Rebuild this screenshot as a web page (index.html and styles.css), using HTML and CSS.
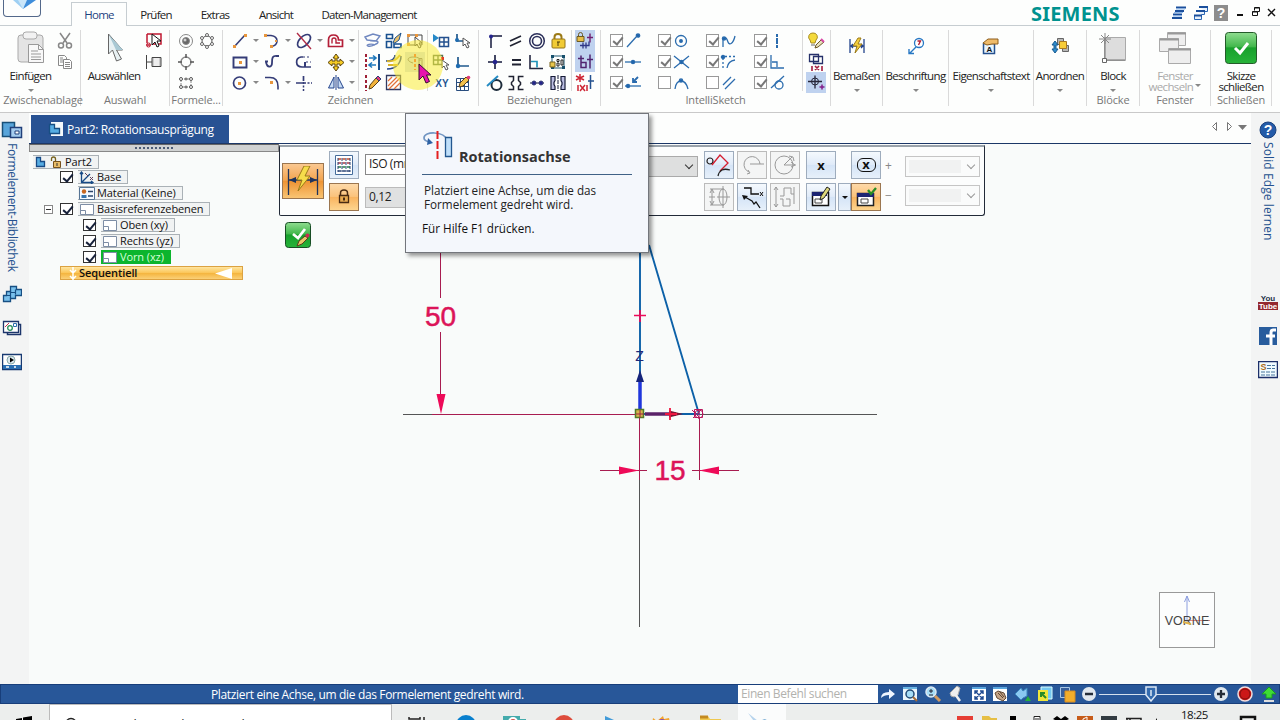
FILE: index.html
```html
<!DOCTYPE html>
<html lang="de">
<head>
    <meta charset="UTF-8">
    <meta name="viewport" content="width=device-width, initial-scale=1.0">
    <title>Solid Edge - Part2</title>
    <link rel="stylesheet" href="styles.css">
</head>
<body>
    <header class="titlebar">
        <div class="app-button">
            <svg width="34" height="14" viewBox="0 0 34 14"><path d="M7 0L17 9L19 0Z" fill="#9fd0f3"/><path d="M19 0L17 9L30 0Z" fill="#3f8edb"/><path d="M12 0L17 9L21 0Z" fill="#c9e6fa"/></svg>
        </div>
        <nav class="tabs">
            <span class="tab tab-active">Home</span>
            <span class="tab tab-pruefen">Prüfen</span>
            <span class="tab tab-extras">Extras</span>
            <span class="tab tab-ansicht">Ansicht</span>
            <span class="tab tab-daten">Daten-Management</span>
        </nav>
        <span class="brand">SIEMENS</span>
        <div class="window-tools">
            <svg width="16" height="16" viewBox="0 0 16 16"><path d="M5 2.500h10M4 6h9M2 9.500h9M1 13h10" stroke="#1b4f9c" stroke-width="2"/><path d="M5 4h9M3 7.500h9M2 11h9" stroke="#8cb6ea"/></svg>
            <svg width="16" height="16" viewBox="0 0 16 16"><path d="M6.500 1.500h8v5h-3M3.500 5.500h8v4h-3M1.500 10.500h7v4h-7z" fill="#e8f1fb" stroke="#2a66b4"/><path d="M6 2h9M3 6h9M1 10.500h8" stroke="#1b4f9c" stroke-width="2"/></svg>
            <svg width="14" height="16" viewBox="0 0 14 16"><rect width="14" height="16" fill="#8d8d8d"/><text x="7" y="13" class="help-mark">?</text></svg>
            <svg width="12" height="14" viewBox="0 0 12 14"><path d="M3 10h6" stroke="#111" stroke-width="2"/></svg>
            <svg width="10" height="14" viewBox="0 0 10 14"><path d="M3.500 5.500v-3h5v4h-2M1.500 6.500h5v4h-5zM1.500 7h5M3.500 3h5" fill="none" stroke="#111"/></svg>
            <svg width="10" height="14" viewBox="0 0 10 14"><path d="M1 4l7 7M8 4l-7 7" stroke="#111" stroke-width="1.400"/></svg>
        </div>
    </header>

    <section class="ribbon">
        <div class="group g-clipboard">
            <div class="group-body">
                <div class="big-button">
                    <svg width="34" height="34" viewBox="0 0 34 34"><rect x="4" y="4" width="25" height="27" rx="3" fill="#e4e4e4" stroke="#aaa"/><rect x="9" y="1" width="14" height="7" rx="3" fill="#f2f2f2" stroke="#aaa"/><path d="M14.500 13.500h10l5 5v13h-15z" fill="#f8f8f8" stroke="#999"/><path d="M24.500 13.500v5h5M17 20h7M17 23h10M17 26h10M17 28.500h10" fill="none" stroke="#999"/></svg>
                    <span>Einfügen</span><i class="caret"></i>
                </div>
                <div class="icon-grid">
                    <svg class="ico gray" viewBox="0 0 20 20"><path d="M5 2l7 10M15 2L8 12" stroke-width="1.500"/><circle cx="6" cy="14.500" r="2.500" stroke-width="1.500"/><circle cx="14" cy="14.500" r="2.500" stroke-width="1.500"/></svg>
                    <svg class="ico gray" viewBox="0 0 20 20"><path d="M3.500 3.500h6l2 2v8h-8z"/><path d="M8.500 7.500h6l2 2v7h-8z" fill="#fff"/><path d="M10 10.500h5M10 12.500h5M10 14.500h5M5 6h3M5 8h3M5 10h3"/></svg>
                </div>
            </div>
            <div class="group-label">Zwischenablage</div>
        </div>

        <div class="group g-select">
            <div class="group-body">
                <div class="big-button">
                    <svg width="34" height="34" viewBox="0 0 34 34"><path d="M11.500 3v20l4-4 4 11 5-2-5-9h6z" fill="#e8f1f3" stroke="#666"/><path d="M12 4l14 15h-7z" fill="#a9c9d4"/></svg>
                    <span>Auswählen</span>
                </div>
                <div class="icon-grid">
                    <svg class="ico" viewBox="0 0 20 20"><path d="M3 3h14v10h-3M3 3v9M6 14H3M8 13h4" stroke="#c01830" stroke-width="1.500"/><circle cx="4.500" cy="14" r="2" stroke="#c01830"/><path d="M8 3v11l3-3 2 5 2-1-2-5h4z" fill="#fff" stroke="#111"/></svg>
                    <svg class="ico gray" viewBox="0 0 20 20"><path d="M2.500 3v14M3 10h5M8 5.500h9v9H8z" fill="#ccc" stroke="#444"/><path d="M10 6h5v8h-5z" fill="#eee" stroke="none"/></svg>
                </div>
            </div>
            <div class="group-label">Auswahl</div>
        </div>

        <div class="group g-form">
            <div class="group-body">
                <div class="icon-grid cols-2">
                    <svg class="ico gray" viewBox="0 0 20 20"><circle cx="10" cy="10" r="6.500"/><circle cx="10" cy="10" r="3.500" fill="#666"/><circle cx="9" cy="9" r="1.500" fill="#eee"/></svg>
                    <svg class="ico gray" viewBox="0 0 20 20"><circle cx="10" cy="10" r="5" stroke="#555"/><g fill="#fff" stroke="#666"><circle cx="10" cy="4" r="1.500"/><circle cx="15" cy="7" r="1.500"/><circle cx="15" cy="13" r="1.500"/><circle cx="10" cy="16" r="1.500"/><circle cx="5" cy="13" r="1.500"/><circle cx="5" cy="7" r="1.500"/></g></svg>
                    <svg class="ico gray" viewBox="0 0 20 20"><circle cx="10" cy="10" r="5" stroke-width="1.400"/><path d="M10 2v4M10 14v4M2 10h4M14 10h4" stroke="#555" stroke-width="1.500"/></svg>
                    <i></i>
                    <svg class="ico gray" viewBox="0 0 20 20"><path d="M5 6h10v8H5z" stroke-dasharray="2 1"/><g fill="#fff" stroke="#555"><circle cx="5" cy="6" r="1.500"/><circle cx="10" cy="6" r="1"/><circle cx="15" cy="6" r="1.500"/><circle cx="5" cy="14" r="1.500"/><circle cx="10" cy="14" r="1"/><circle cx="15" cy="14" r="1.500"/></g></svg>
                </div>
            </div>
            <div class="group-label">Formele...</div>
        </div>

        <div class="group g-draw">
            <div class="group-body">
                <div class="icon-grid cols-draw">
                    <svg class="ico" viewBox="0 0 20 20"><path d="M4 16L15 4" stroke-width="1.600"/><path class="dot" d="M3 14h3v3H3zM14 3h3v3h-3z"/></svg><i class="caret"></i>
                    <svg class="ico" viewBox="0 0 20 20"><path d="M4 4.500h5c8 1 8 10 0 11" stroke-width="1.600"/><path class="dot" d="M2 3h3v3H2zM8 14h3v3H8zM13 9h2v2h-2z"/></svg><i class="caret"></i>
                    <svg class="ico" viewBox="0 0 20 20"><ellipse cx="10" cy="10" rx="8" ry="4.500" transform="rotate(-45 10 10)" stroke-width="1.700"/><path d="M3 2l14 16" stroke="#b02a45" stroke-width="1.300"/></svg><i class="caret"></i>
                    <svg class="ico" viewBox="0 0 20 20"><path d="M2.500 15.500V9q0-5 5-5t5 5h4v6.500z" stroke="#b41f38" stroke-width="1.700"/><path d="M6 12.500V9q0-2 2-2t2 2v3h4" stroke="#b41f38" stroke-width="1.400"/></svg><i class="caret"></i>

                    <svg class="ico" viewBox="0 0 20 20"><path d="M3.500 5.500h13v10h-13z" stroke-width="1.900"/><path class="dot" d="M9 9h3v3H9z"/></svg><i class="caret"></i>
                    <svg class="ico" viewBox="0 0 20 20"><path d="M4 10c1 6 6 6 6 1s0-8 6-7" stroke-width="1.800"/><path d="M3 9.500h3M14 4h3" stroke-width="2"/></svg><i></i>
                    <svg class="ico" viewBox="0 0 20 20"><path d="M9 5H7c-6 1-6 10 1 10h9" stroke-width="1.700"/><path d="M9 5h8M12 10h5" stroke-dasharray="2 2"/><path d="M11 10v5" stroke-width="2"/></svg><i></i>
                    <svg class="ico" viewBox="0 0 20 20"><path d="M10 2l3 4h-2v3h3V7l4 3.500-4 3.500v-2h-3v3h2l-3 4-3-4h2v-3H6v2l-4-3.500L6 7v2h3V6H7z" fill="#f5cb25" stroke="#5c4510"/></svg><i class="caret"></i>

                    <svg class="ico" viewBox="0 0 20 20"><circle cx="9.500" cy="10" r="6" stroke-width="1.700"/><path class="dot" d="M8 9h3v3H8z"/></svg><i class="caret"></i>
                    <svg class="ico" viewBox="0 0 20 20"><path d="M3 4.500h5q8 0 8 9v3" stroke-width="1.600"/><path class="dot" d="M8 8h3v3H8z"/></svg><i class="caret"></i>
                    <svg class="ico" viewBox="0 0 20 20"><path d="M2 10h7M9.500 3v5" stroke-width="1.700"/><path d="M9.500 9v9M10 10h8" stroke-dasharray="2 1.500" stroke-width="1.500"/></svg><i></i>
                    <svg class="ico" viewBox="0 0 20 20"><path d="M8 4v11H2.500zM12 4v11h5.500z" fill="#c8dcf3" stroke="#24448d"/><path d="M10 2v15" stroke="#24448d"/></svg><i class="caret"></i>
                </div>
                <i class="rule"></i>
                <div class="icon-grid cols-3">
                    <svg class="ico" viewBox="0 0 20 20"><path d="M2 6l8-3 7 2-4 5-9-1zM7 10c8-1 10 1 6 3s-5 3-8 2 3-3 7-1" stroke="#7088c0" stroke-width="1.400"/></svg>
                    <svg class="ico" viewBox="0 0 20 20"><path d="M2.500 3.500h6v4h-6zM2.500 10.500h5v6h-5zM10 13h7v3.500h-7z" stroke="#18508f" stroke-width="1.600"/><path d="M9 12l2-5 6-5-2 7-4 3z" fill="#e9c16c" stroke="#18508f"/></svg>
                    <svg class="ico" viewBox="0 0 20 20"><path d="M3 4h14v10H3z" stroke="#444"/><path class="dot" d="M2 3h3v3H2zM10 3h3v3h-3zM2 12h3v3H2z"/><path d="M10 6v9l2-2 2 4 2-1-2-4h3z" fill="#fff" stroke="#444"/></svg>
                    <svg class="ico" viewBox="0 0 20 20"><path d="M3 2v16" stroke="#9e2036" stroke-width="2" stroke-dasharray="3 2"/><path d="M16 2v16" stroke="#18508f" stroke-width="2"/><path d="M6 6h7M10 3.500L13 6l-3 2.500M13 13H6M9 10.500L6 13l3 2.500" stroke="#1c78bd" stroke-width="1.600"/></svg>
                    <svg class="ico" viewBox="0 0 20 20"><path d="M2 9c7 0 9-3 9-6M3 17c10 0 14-7 14-13" stroke="#24448d" stroke-width="1.500"/><path d="M3 9c7 1 10-2 13-6M4 13h10" stroke="#d8b52c" stroke-width="2"/></svg>
                    <svg class="ico pressed" viewBox="0 0 20 20"><path d="M8 11c-7-2-6-6 0-6q8 0 7 4M14 6.500h3v9h-3z" stroke="#777"/><path d="M10 2v16" stroke="#f1592a" stroke-width="2" stroke-dasharray="3 2"/></svg>
                    <svg class="ico" viewBox="0 0 20 20"><path d="M3 2v16" stroke="#9e2036" stroke-width="2" stroke-dasharray="3 2"/><path d="M6 16l1-4 6-7 3 3-7 7z" fill="#f2b33b" stroke="#594018"/><path d="M13 5l2-2 3 3-2 2z" fill="#e13a79"/></svg>
                    <svg class="ico" viewBox="0 0 20 20"><path d="M2.500 2.500h14v14h-14z" stroke="#303a63" stroke-width="1.300"/><path d="M4 8l4-4M4 13l9-9M5 16L16 5M10 16l6-6" stroke="#e2713a" stroke-width="1.200"/></svg>
                </div>
                <i class="rule"></i>
                <div class="icon-grid cols-xy">
                    <svg class="ico" viewBox="0 0 20 20"><path d="M1 3l6 4-6 4z" fill="#2689c8" stroke="none"/><path d="M7.500 6.500h9v9h-9zM12 7v8M8 11h8" stroke="#24518f" stroke-width="1.500"/></svg>
                    <svg class="ico" viewBox="0 0 20 20"><path d="M4 3v7h8" stroke="#20598d" stroke-width="1.700"/><circle cx="4" cy="9" r="2" fill="#1f6cb0" stroke="none"/><path d="M10 7v8l2-2 2 4 2-1-2-4h3z" fill="#fff" stroke="#555"/></svg>
                    <svg class="ico" viewBox="0 0 20 20"><path d="M1.500 3.500h9v9h-9zM6 4v8M2 8h8" stroke="#5b7552" stroke-width="1.400"/><path d="M9 5h3v3H9z" fill="#e43c28" stroke="none"/><path d="M10 8v8l2-2 2 4 2-1-2-4h3z" fill="#fff" stroke="#555"/></svg>
                    <svg class="ico" viewBox="0 0 20 20"><path d="M5 5v9h11" stroke="#20598d" stroke-width="1.700"/><circle cx="5" cy="14" r="2.200" fill="#1f6cb0" stroke="none"/></svg>
                    <svg class="ico" viewBox="0 0 20 20"><text x="10" y="14" class="xy">XY</text></svg>
                    <svg class="ico" viewBox="0 0 20 20"><path d="M3.500 5.500h12v12h-12zM7.500 6v11M11.500 6v11M4 9.500h11M4 13.500h11" stroke="#294d7e"/><path d="M6 14l1-4 6-6 3 3-6 6z" fill="#f2c04b" stroke="#594018"/><circle cx="15.500" cy="4.500" r="1.800" fill="#e13a79" stroke="none"/></svg>
                </div>
            </div>
            <div class="group-label">Zeichnen</div>
        </div>

        <div class="group g-rel">
            <div class="group-body">
                <div class="icon-grid cols-4">
                    <svg class="ico" viewBox="0 0 20 20"><path d="M6 17V5h11" stroke="#151a3c" stroke-width="1.500"/><circle cx="6" cy="5.500" r="2" fill="#24248c" stroke="none"/></svg>
                    <svg class="ico dark" viewBox="0 0 20 20"><path d="M4 10l11-5M4 15l11-5" stroke-width="1.600"/></svg>
                    <svg class="ico" viewBox="0 0 20 20"><circle cx="10" cy="10" r="7.300" stroke="#2d315b" stroke-width="1.500"/><circle cx="10" cy="10" r="4.500" stroke="#2d315b" stroke-width="1.600"/></svg>
                    <svg class="ico" viewBox="0 0 20 20"><path d="M6.500 9V6q0-3 3.500-3t3.500 3v3" stroke="#9b7a16" stroke-width="2"/><rect x="4" y="8" width="13" height="9" rx="1" fill="#f1cb35" stroke="#94751b"/><path d="M10 11v4M9 11h3" stroke="#493908"/></svg>
                    <svg class="ico" viewBox="0 0 20 20"><path d="M10 3v14M3 10h14" stroke="#151a3c" stroke-width="1.600"/><circle cx="10" cy="10" r="2.300" fill="#24248c" stroke="none"/></svg>
                    <svg class="ico dark" viewBox="0 0 20 20"><path d="M6 8h9M6 12.500h9" stroke-width="2.200"/></svg>
                    <svg class="ico" viewBox="0 0 20 20"><path d="M3 3v13.500h13" stroke="#242741" stroke-width="1.600"/><path d="M4 9.500h6v6" stroke="#2394bb" stroke-width="1.700"/></svg>
                    <svg class="ico" viewBox="0 0 20 20"><path d="M4 4h12v12H4z" stroke="#1d5670"/><path d="M3 3h3v3H3zM14 3h3v3h-3zM3 14h3v3H3zM14 14h3v3h-3z" fill="#164f6b" stroke="none"/><path d="M2 10h5v5H2z" fill="#e9c64c" stroke="#76621d"/><path d="M9 7.500h2v2H9zM9 11h2v3H9zM13 8h2v5h-2z" fill="#fff" stroke="#222"/></svg>
                    <svg class="ico" viewBox="0 0 20 20"><circle cx="11.500" cy="12" r="5" stroke="#1d2c3b" stroke-width="2"/><path d="M2 13L13 3" stroke="#248ac2" stroke-width="1.900"/></svg>
                    <svg class="ico dark" viewBox="0 0 20 20"><path d="M2.500 3.500h5v4l-2 2v2l2 2v3h-5M17.500 3.500h-5v4l2 2v2l-2 2v3h5" stroke-width="1.500"/></svg>
                    <svg class="ico" viewBox="0 0 20 20"><path d="M3 10h14" stroke="#151a3c"/><circle cx="7" cy="10" r="2" fill="#24248c"/><circle cx="14" cy="10" r="2" fill="#24248c"/></svg>
                    <svg class="ico" viewBox="0 0 20 20"><path d="M3 3.500h4v4l-1 2v2l1 2v3H3zM17 3.500h-4v4l1 2v2l-1 2v3h4z" fill="#babde0" stroke="#171b38" stroke-width="1.200"/><path d="M10 2v16" stroke="#171b38" stroke-dasharray="4 1"/></svg>
                </div>
                <i class="rule"></i>
                <div class="icon-grid toggles">
                    <svg class="ico on" viewBox="0 0 20 20"><path d="M3.500 6.500V4q0-2 2-2t2 2v2.500" stroke="#6b5b26"/><path d="M2 6h7v5H2z" fill="#e6bc47" stroke="#6b5b26"/><path d="M15 3v9M12 7h6" stroke="#702070" stroke-width="1.400"/><path d="M5 15h9v-4M8 12v6M11 12v6" stroke="#303888" stroke-width="1.300"/></svg>
                    <svg class="ico on" viewBox="0 0 20 20"><path d="M6 4v12h5v-5H6M3 7h6M15 3v14M12 8h6" stroke="#512470" stroke-width="1.500"/></svg>
                    <svg class="ico" viewBox="0 0 20 20"><path d="M5 1v8M1 3l8 4M9 3L1 7M3 12v6M12 12v6M5 12l5 6M10 12l-5 6" stroke="#ce2534" stroke-width="1.500"/><path d="M15.500 2v14M13 8h6" stroke="#24518f" stroke-width="1.500"/></svg>
                </div>
            </div>
            <div class="group-label">Beziehungen</div>
        </div>

        <div class="group g-intelli">
            <div class="group-body">
                <div class="icon-grid cols-check">
                    <i class="check checked"></i><svg class="ico blue" viewBox="0 0 20 20"><path d="M4 16L14 5"/><circle cx="15" cy="4.500" r="1.700"/></svg>
                    <i class="check checked"></i><svg class="ico blue" viewBox="0 0 20 20"><circle cx="10" cy="10" r="5.500" class="open"/><circle cx="10" cy="10" r="1.300"/></svg>
                    <i class="check checked"></i><svg class="ico blue" viewBox="0 0 20 20"><path d="M4 16V8c3-3 4 0 5 3s5 3 7-6" class="open"/><circle cx="5" cy="7.500" r="1.600"/></svg>
                    <i class="check checked"></i><svg class="ico blue" viewBox="0 0 20 20"><path d="M10 3v14" stroke-width="2" stroke-dasharray="3 1 6 1"/></svg>

                    <i class="check checked"></i><svg class="ico blue" viewBox="0 0 20 20"><path d="M2 10h16"/><circle cx="10" cy="10" r="1.600"/></svg>
                    <i class="check checked"></i><svg class="ico blue" viewBox="0 0 20 20"><path d="M3 4l15 12M18 4L3 16"/><circle cx="10.500" cy="10" r="1.600"/></svg>
                    <i class="check checked"></i><svg class="ico blue" viewBox="0 0 20 20"><path d="M4 6v12M6 4.500h11" stroke-dasharray="2 2"/><path d="M8 16q1-7 8-8" class="open"/><circle cx="4" cy="5" r="1.600"/></svg>
                    <i class="check checked"></i><svg class="ico blue" viewBox="0 0 20 20"><path d="M4 3v13h13M5 10h5v5" class="open"/></svg>

                    <i class="check checked"></i><svg class="ico blue" viewBox="0 0 20 20"><path d="M2 13h16"/><circle cx="5" cy="13" r="1.600"/><path d="M15 4l-5 5M10 5v4h4" stroke-width="1.800" class="open"/></svg>
                    <i class="check"></i><svg class="ico blue" viewBox="0 0 20 20"><path d="M4 16q1-8 6-8t7 8" class="open"/><circle cx="10" cy="7.500" r="1.600"/></svg>
                    <i class="check"></i><svg class="ico blue" viewBox="0 0 20 20"><path d="M4 12l8-8M6 16L16 6"/></svg>
                    <i class="check checked"></i><svg class="ico blue" viewBox="0 0 20 20"><path d="M4 15L17 3"/><circle cx="12" cy="12" r="4" class="open"/></svg>
                </div>
                <i class="rule"></i>
                <div class="icon-grid toggles">
                    <svg class="ico" viewBox="0 0 20 20"><path d="M7 2a4 4 0 0 1 3 7l-1 3H5L4 9a4 4 0 0 1 3-7z" fill="#f4da3b" stroke="#a98d23"/><path d="M5 14h4" stroke="#666"/><path d="M9 17l1-3 5-5 3 2-6 5z" fill="#e6dfbb" stroke="#6b5727"/><path d="M15 8l3 3" stroke="#d948a7" stroke-width="2"/></svg>
                    <svg class="ico" viewBox="0 0 20 20"><path d="M3.500 2.500h9v7h-9zM7.500 4.500h9v7h-9z" stroke="#26316a" stroke-width="1.300"/><path d="M6 14v5M16 14v5M9 14l4 4M13 14l-4 4" stroke="#a51c3e" stroke-width="1.600"/></svg>
                    <svg class="ico on" viewBox="0 0 20 20"><circle cx="9" cy="9" r="3.500" stroke="#252538"/><path d="M9 3v13M2 9h14" stroke="#252538" stroke-width="1.300"/><path d="M16 12v5M13.500 14.500h5" stroke="#821e8a" stroke-width="1.500"/></svg>
                </div>
            </div>
            <div class="group-label">IntelliSketch</div>
        </div>

        <div class="group g-dim">
            <div class="big-button small-art">
                <svg width="20" height="20" viewBox="0 0 20 20"><path d="M3 3v14M17 3v14M4 10h12M6 8l-2 2 2 2M14 8l2 2-2 2" stroke="#24448d" fill="none" stroke-width="1.300"/><path d="M11 2L6 10h4l-2 7 7-9h-4l3-6z" fill="#f5ce3c" stroke="#9a7a18"/></svg>
                <span>Bemaßen</span><i class="caret"></i>
            </div>
        </div>
        <div class="group g-note">
            <div class="big-button small-art">
                <svg width="20" height="20" viewBox="0 0 20 20"><circle cx="13" cy="7" r="4.500" fill="#fff" stroke="#2778c4" stroke-width="1.300"/><path d="M10 11l-6 6M3 13v4.500h5" stroke="#2778c4" fill="none" stroke-width="1.400"/><path d="M11.500 5h3l-2 4" fill="none" stroke="#b41f38" stroke-width="1.400"/></svg>
                <span>Beschriftung</span><i class="caret"></i>
            </div>
        </div>
        <div class="group g-prop">
            <div class="big-button small-art">
                <svg width="20" height="20" viewBox="0 0 20 20"><path d="M2.500 7.500h11v10h-11z" fill="#e9f5fd" stroke="#24518f" stroke-width="1.500"/><path d="M2 7l5-4h10v5h-6L6 9z" fill="#efbb69" stroke="#8e5f1e"/><text x="8" y="16" class="letter-a">A</text></svg>
                <span>Eigenschaftstext</span><i class="caret"></i>
            </div>
        </div>
        <div class="group g-arr">
            <div class="big-button small-art">
                <svg width="20" height="20" viewBox="0 0 20 20"><path d="M7.500 2.500h6v6h-6zM12.500 9.500h6v6h-6z" fill="#b6b6b6" stroke="#666"/><path d="M9.500 5.500h7v7h-7z" fill="#f8cc38" stroke="#aa7820"/><path d="M5 5l3 4H6v4h2l-3 4-3-4h2V9H2z" fill="#2e8ccc" stroke="#175b91"/></svg>
                <span>Anordnen</span><i class="caret"></i>
            </div>
        </div>
        <div class="group g-block">
            <div class="big-button">
                <svg width="34" height="34" viewBox="0 0 34 34"><path d="M8.500 6.500h21v23h-21z" fill="#ddd" stroke="#aaa"/><path d="M9 7v22h20" stroke="#777" fill="none"/><path d="M9 2v11M3 8h12M5 4l8 8M13 4l-8 8" stroke="#888"/><path d="M6.500 27.500h4v4h-4z" fill="#fff" stroke="#666"/></svg>
                <span>Block</span><i class="caret"></i>
            </div>
            <div class="group-label">Blöcke</div>
        </div>
        <div class="group g-window">
            <div class="big-button disabled">
                <svg width="34" height="34" viewBox="0 0 34 34"><g fill="#eee" stroke="#aaa"><path d="M9.500 1.500h18v13h-18z"/><path d="M1.500 7.500h19v13h-19z"/><path d="M10.500 17.500h22v15h-22z"/></g><path d="M10 2.500h18M2 8.500h19M11 18.500h22" stroke="#999" stroke-width="2"/></svg>
                <span>Fenster<br>wechseln <i class="caret"></i></span>
            </div>
            <div class="group-label">Fenster</div>
        </div>
        <div class="group g-close">
            <div class="big-button">
                <svg width="34" height="34" viewBox="0 0 34 34"><defs><linearGradient id="green" x2="0" y2="1"><stop stop-color="#8fdd90"/><stop offset=".45" stop-color="#44b84d"/><stop offset=".5" stop-color="#18a02c"/><stop offset="1" stop-color="#27b339"/></linearGradient></defs><rect x="1.500" y="1.500" width="31" height="31" rx="3" fill="url(#green)" stroke="#245b2a"/><path d="M11 17l5 5 8-10" fill="none" stroke="#fff" stroke-width="3"/></svg>
                <span>Skizze<br>schließen</span>
            </div>
            <div class="group-label">Schließen</div>
        </div>
    </section>

    <main class="workspace">
        <aside class="rail rail-left">
            <svg width="22" height="20" viewBox="0 0 22 20"><path d="M1.500 2.500h12v14h-12z" fill="#58a5da" stroke="#185078" stroke-width="1.500"/><path d="M9.500 7.500h11v10h-11z" fill="#a5ccef" stroke="#203f7a" stroke-width="1.500"/><path d="M14 11h4v3h-4z" fill="#fff" stroke="#203f7a"/></svg>
            <span class="rail-text">Formelement-Bibliothek</span>
            <svg width="20" height="18" viewBox="0 0 20 18"><path d="M8.500 1.500h6v3h5v6h-6v3h-5v3h-7v-6h3v-4h4z" fill="#79c0ec" stroke="#174f83" stroke-width="1.300"/><path d="M4.500 10.500h4v3M8.500 5.500v5M13.500 4.500v5M9 7.500h4.500" fill="none" stroke="#174f83" stroke-width="1.200"/></svg>
            <svg width="20" height="18" viewBox="0 0 20 18"><path d="M5.500 5.500h13v10h-13z" fill="#fff" stroke="#1c356b" stroke-width="1.500"/><path d="M1.500 2.500h15v11h-15z" fill="#fff" stroke="#1c356b" stroke-width="1.300"/><circle cx="8" cy="9" r="2.300" fill="none" stroke="#248c55" stroke-width="1.300"/><path d="M3 8l4-4" stroke="#c83350"/><path d="M11.500 4.500h3v3h-3z" fill="none" stroke="#2e70ae"/></svg>
            <svg width="20" height="18" viewBox="0 0 20 18"><path d="M.5 1.500h19v15H.5z" fill="#fff" stroke="#183a72" stroke-width="1.500"/><path d="M1 14h18" stroke="#2a6fb3" stroke-width="4"/><circle cx="9" cy="7" r="4" fill="#dbe7ef" stroke="#8aa"/><path d="M8 4.500l4 2.500-4 2.500z"/><path d="M4 14h3M12 14h2" stroke="#fff" stroke-width="1.500"/></svg>
        </aside>

        <section class="document">
            <div class="doc-tabs">
                <div class="doc-tab">
                    <svg width="16" height="16" viewBox="0 0 16 16"><path d="M3 1h12v14H3z" fill="#f5f9fc"/><path d="M1.500 3.500h5v4h5v5h-10z" fill="#57ade3" stroke="#174f83" stroke-width="1.300"/></svg>
                    Part2: Rotationsausprägung
                </div>
                <svg class="doc-nav" width="36" height="12" viewBox="0 0 36 12"><path d="M5.500 1.500v8L1.500 5.500zM16.500 1.500v8l4-4z" fill="#fff" stroke="#777"/><path d="M27 4h9l-4.500 5z" fill="#777"/></svg>
            </div>
            <div class="doc-body">
                <div class="pathfinder">
                    <div class="grip"></div>
                    <div class="tree">
                        <div class="row lvl-0"><span class="node"><svg width="28" height="12" viewBox="0 0 28 12"><path d="M1.500 1.500h4v4h4v5h-8z" fill="#57ade3" stroke="#174a86" stroke-width="1.300"/><path d="M16.500 5V3q0-2 2-2t2 2v3" fill="none" stroke="#76621d" stroke-width="1.300"/><path d="M18.500 5.500h7v6h-7z" fill="#e9bd68" stroke="#76511d"/><path d="M22 7v3" stroke="#333"/></svg>Part2</span></div>
                        <div class="row lvl-1"><i class="box"></i><span class="node"><svg width="16" height="13" viewBox="0 0 16 13"><path d="M2.500 1v10.500H14M3 11L11 3M1 3l1.500-2L4 3M12 10l2 1.500-2 1.500" fill="none" stroke="#174a86" stroke-width="1.300"/><path d="M6 2l3 3M11 6l3 3M14 6l-3 3" stroke="#604058"/></svg>Base</span></div>
                        <div class="row lvl-mat"><span class="node"><svg width="16" height="13" viewBox="0 0 16 13"><path d="M.5.500h15v12H.5z" fill="#f5f9ff" stroke="#567494"/><circle cx="5" cy="4.500" r="2.200" fill="#c86720"/><path d="M2.500 8h5v3h-5z" fill="#3674ae"/><path d="M9 4.500h5M9 9h5" stroke="#2a456a" stroke-width="1.400"/></svg>Material (Keine)</span></div>
                        <div class="row lvl-ref"><i class="minus"></i><i class="box"></i><span class="node"><svg class="plane" width="16" height="13" viewBox="0 0 16 13"><path d="M1.500 1.500h13v10h-13zM1.500 7.500h5v4"/></svg>Basisreferenzebenen</span></div>
                        <div class="row lvl-2"><i class="box"></i><span class="node"><svg class="plane" width="16" height="13" viewBox="0 0 16 13"><path d="M1.500 1.500h13v10h-13zM1.500 7.500h5v4"/></svg>Oben (xy)</span></div>
                        <div class="row lvl-2"><i class="box"></i><span class="node"><svg class="plane" width="16" height="13" viewBox="0 0 16 13"><path d="M1.500 1.500h13v10h-13zM1.500 7.500h5v4"/></svg>Rechts (yz)</span></div>
                        <div class="row lvl-2"><i class="box"></i><span class="node node-active"><svg class="plane" width="16" height="13" viewBox="0 0 16 13"><path d="M1.500 1.500h13v10h-13zM1.500 7.500h5v4"/></svg>Vorn (xz)</span></div>
                        <div class="sequence">
                            <svg width="10" height="13" viewBox="0 0 10 13"><path d="M5 0v13M2 3l3 3 3-3M2 9l3 3 3-3" fill="none" stroke="#fff" stroke-width="1.500"/></svg>
                            <span>Sequentiell</span>
                            <svg width="17" height="11" viewBox="0 0 17 11"><path d="M0 5.500L17 0v11z" fill="#fff"/></svg>
                        </div>
                    </div>
                </div>

                <div class="canvas">
                    <svg class="drawing" width="972" height="540" viewBox="279 144 972 540">
                        <path d="M403 414.500H877M639.500 414V627" stroke="#555"/>
                        <path d="M640 250V414H699L649 245" fill="none" stroke="#0d61a8" stroke-width="1.900"/>
                        <g stroke="#a81c50" fill="none"><path d="M432 414.500H636M440.500 250V298M440.500 332V400M600 470.500H647M692 470.500H739M639.500 418V480M699.500 418V480"/></g>
                        <g fill="#ee0a58"><path d="M436.500 394h9l-4.500 20zM619 466.500l20 4-20 4zM719 466.500l-20 4 20 4z"/></g>
                        <path d="M634 315.500h12M640 310v12" stroke="#ee0a58" stroke-width="1.700"/>
                        <path d="M640 410V378" stroke="#2037dc" stroke-width="3.500"/><path d="M636 382l4-12 4 12z" fill="#17247b"/>
                        <text x="639.500" y="361" class="axis">Z</text>
                        <path d="M645 414H676" stroke="#5b2368" stroke-width="3.500"/><path d="M669 410.500l14 3.500-14 3.500z" fill="#7d1532"/><path d="M665 414h12M670 408v12" stroke="#ee1740" stroke-width="1.800"/>
                        <rect x="635.500" y="409.500" width="8" height="8" fill="#d6b34c" stroke="#527b27" stroke-width="1.500"/><path d="M636 414h8M640 410v8" stroke="#9c2441"/>
                        <g fill="none" stroke="#b9185e"><circle cx="699" cy="414" r="4"/><path d="M694.500 409.500h8v8h-8zM692 410l8 8M693 418l9-9M699 409v10"/></g>
                        <text x="440.500" y="325.500" class="dimension">50</text>
                        <text x="670" y="480" class="dimension">15</text>
                        <g class="cube"><rect x="1159.500" y="592.500" width="55" height="55" fill="#fcfdfd" stroke="#999"/><path d="M1187 622V596M1184.500 602l2.500-6 2.500 6" stroke="#8c9edf" fill="none"/><path d="M1186 620.500h24" stroke="#e58b84"/><text x="1187" y="624.500" class="cube-label">VORNE</text><path d="M1183 622l8 2" stroke="#dfb34c" stroke-width="2"/></g>
                    </svg>

                    <div class="command-bar">
                        <div class="tool tool-large active">
                            <svg width="34" height="30" viewBox="0 0 34 30"><path d="M2.500 3v26M31.500 3v26M3 14h28" stroke="#20345c" fill="none" stroke-width="1.300"/><path d="M10 11l-7 3 7 3zM24 11l7 3-7 3z" fill="#20345c"/><path d="M18 0l-7 14h5l-4 11 12-15h-5l5-10z" fill="#f6dc4b" stroke="#9a7a18"/></svg>
                        </div>
                        <div class="tool-grid pair">
                            <div class="tool"><svg width="20" height="20" viewBox="0 0 20 20"><path d="M1.500.500h17v19h-17z" fill="#fff" stroke="#456c9b"/><path d="M4 4h12" stroke="#c34a2d" stroke-width="1.600" stroke-dasharray="3 1.500"/><path d="M4 8h12" stroke="#b03a48" stroke-width="1.600" stroke-dasharray="3 1.500"/><path d="M4 12h12" stroke="#25814a" stroke-width="1.600" stroke-dasharray="3 1.500"/><path d="M4 16h12" stroke="#2b4475" stroke-width="1.600" stroke-dasharray="3 1.500"/><path d="M4 3v14M8 3v14M12 3v14M16 3v14" stroke="#2b4475" stroke-dasharray="3 1"/></svg></div>
                            <div class="tool active light"><svg width="18" height="18" viewBox="0 0 18 18"><path d="M5.500 8V5q0-3 3.500-3t3.500 3v3" fill="none" stroke="#4a2b12" stroke-width="1.500"/><path d="M4.500 7.500h9v7h-9z" fill="#e8aa50" stroke="#4a2b12" stroke-width="1.300"/><path d="M9 9.500v3" stroke="#4a2b12" stroke-width="2"/></svg></div>
                        </div>
                        <div class="fields">
                            <div class="field">ISO (mm)</div>
                            <div class="field field-gray">0,12</div>
                        </div>
                        <div class="combo combo-style"><i class="chevron"></i></div>
                        <div class="tool-grid trio">
                            <div class="tool"><svg width="26" height="24" viewBox="0 0 26 24"><circle cx="4" cy="8" r="3" fill="none" stroke="#222" stroke-width="1.200"/><path d="M6 12l8-10 8 8-8 8" fill="none" stroke="#d51d2f" stroke-width="1.300"/><path d="M12 23q2-9 12-6" fill="none" stroke="#222" stroke-width="1.300"/></svg></div>
                            <div class="tool off"><svg width="24" height="24" viewBox="0 0 24 24"><path d="M9 19a8 8 0 1 1 11-8M10 11h14M8 17l2 3-3 1" fill="none"/></svg></div>
                            <div class="tool off"><svg width="24" height="24" viewBox="0 0 24 24"><circle cx="11" cy="12" r="9" fill="none"/><path d="M11 12l8-8M11 12h12M16 3l4 1 1 4M18 9l4 3-4 2" fill="none"/></svg></div>
                            <div class="tool off"><svg width="24" height="24" viewBox="0 0 24 24"><path d="M3 4h14M3 20h14M5 4v16M2 12h6M3 8l2-4 2 4M3 16l2 4 2-4M10 12h13M16 1v22" fill="none"/><ellipse cx="16" cy="12" rx="4" ry="8" fill="none"/></svg></div>
                            <div class="tool"><svg width="24" height="24" viewBox="0 0 24 24"><path d="M4 3h7v6h8M5 12l7 4 2 3 2-2 4 6" fill="none" stroke="#111" stroke-width="1.300"/><path d="M2 10l6 1-4 4z" fill="#111"/><path d="M20 7l3 4M23 7l-3 4" stroke="#111"/></svg></div>
                            <div class="tool off"><svg width="24" height="24" viewBox="0 0 24 24"><path d="M3 2v20M1 5l2-3 2 3M1 19l2 3 2-3M7 11h4V3h7v6h3M7 14h3v7h7v-7h-4M21 2v17" fill="none"/></svg></div>
                        </div>
                        <div class="tool-grid edit">
                            <div class="tool key">x</div>
                            <div class="split"><div class="tool"><svg width="22" height="22" viewBox="0 0 22 22"><path d="M2.500 6.500h16v13h-16z" fill="#fff" stroke="#111" stroke-width="1.500"/><path d="M2 8h15" stroke="#1c2472" stroke-width="4"/><path d="M5 13h7v4H5z" fill="none" stroke="#444"/><path d="M10 14l1-4 6-9 3 2-6 9z" fill="#ddd77c" stroke="#222"/></svg></div><div class="tool drop"><i class="caret black"></i></div></div>
                        </div>
                        <div class="tool-grid confirm">
                            <div class="tool key"><span class="ring">x</span></div>
                            <div class="tool active light"><svg width="22" height="22" viewBox="0 0 22 22"><path d="M2.500 7.500h16v12h-16z" fill="#fff" stroke="#222" stroke-width="1.500"/><path d="M2 9h17" stroke="#1c2472" stroke-width="4"/><path d="M6 13h7v4H6z" fill="none" stroke="#444"/><path d="M13 4l3 4 5-6" stroke="#268d24" stroke-width="2.300" fill="none"/></svg></div>
                        </div>
                        <div class="signs"><span>+</span><span>−</span></div>
                        <div class="limits"><div class="combo"><i class="chevron"></i></div><div class="combo"><i class="chevron"></i></div></div>
                    </div>
                    <div class="finish">
                        <svg width="26" height="26" viewBox="0 0 26 26"><rect x=".5" y=".5" width="25" height="25" rx="3" fill="url(#green)" stroke="#184d24"/><path d="M8 12l5 4 7-9" fill="none" stroke="#fff" stroke-width="2.700"/><path d="M12 24l2-5 6-5 3 2-6 6z" fill="#e8c86a" stroke="#5b3c1b"/><circle cx="22.500" cy="13.500" r="2" fill="#c82c52"/></svg>
                    </div>
                </div>
            </div>
        </section>

        <aside class="rail rail-right">
            <svg width="18" height="18" viewBox="0 0 18 18"><circle cx="9" cy="9" r="8" fill="#245ba8" stroke="#1b427e"/><text x="9" y="14" class="help-mark">?</text></svg>
            <span class="rail-text">Solid Edge lernen</span>
            <svg width="20" height="18" viewBox="0 0 20 18"><path d="M0 9h20v8H0z" fill="#94282f"/><text x="10" y="8" class="yt yt-dark">You</text><text x="10" y="16" class="yt">Tube</text></svg>
            <svg width="18" height="18" viewBox="0 0 18 18"><path d="M0 0h18v18H0z" fill="#285c9d"/><path d="M17 3h-3q-2 0-2 3v12M7 9h9" fill="none" stroke="#fff" stroke-width="3"/></svg>
            <svg width="20" height="18" viewBox="0 0 20 18"><path d="M.5.500h19v16H.5z" fill="#f0fbff" stroke="#1c2f69" stroke-width="1.500"/><text x="5.500" y="9" class="s-mark">S</text><path d="M9 4.500h8M9 7.500h8M3 11h14M3 14h14" stroke="#47759d" stroke-dasharray="4 1"/></svg>
        </aside>
    </main>

    <footer class="statusbar">
        <span class="prompt">Platziert eine Achse, um die das Formelement gedreht wird.</span>
        <div class="command-search">Einen Befehl suchen</div>
        <div class="status-icons">
            <svg viewBox="0 0 18 18"><path d="M2 13q0-6 8-6V4l6 5-6 5v-4q-5 0-8 3z" fill="#f0f6ff"/></svg>
            <svg viewBox="0 0 18 18"><path d="M2 2h14v13H2z" fill="#ecf6fc"/><path d="M2 3h14" stroke="#6bb5e3" stroke-width="2"/><circle cx="9" cy="9" r="4" fill="#a7ddf7" stroke="#234b76" stroke-width="1.500"/><path d="M12 12l4 4" stroke="#a46b39" stroke-width="2"/></svg>
            <svg viewBox="0 0 18 18"><circle cx="7" cy="7" r="5" fill="#a7ddf7" stroke="#dce8f2" stroke-width="1.500"/><path d="M5 6h4M7 4v4M5 10h4" stroke="#223"/><path d="M11 11l5 5" stroke="#d19a60" stroke-width="3"/></svg>
            <svg viewBox="0 0 18 18"><path d="M4 8l7-7 3 2-2 7-4 2-3-1z" fill="#eee" stroke="#aaa"/><path d="M9 9l5 7" stroke="#eee" stroke-width="2.500"/></svg>
            <svg viewBox="0 0 18 18"><path d="M3 3h14v13H3z" fill="#fff"/><path d="M3 3h14" stroke="#5aa5dd" stroke-width="2"/><path d="M6 6l8 8M14 6l-8 8M6 9V6h3M11 6h3v3M6 11v3h3M11 14h3v-3" stroke="#204b92" fill="none" stroke-width="1.400"/></svg>
            <svg viewBox="0 0 18 18"><path d="M2 3h14v13H2z" fill="#fff"/><path d="M2 3h14" stroke="#5aa5dd" stroke-width="2"/><path d="M4 8l3-2 6 2 2 5-3 3-6-3z" fill="#c3a387" stroke="#604834"/><path d="M7 8l5 5M9 7l4 5" stroke="#604834"/></svg>
            <svg viewBox="0 0 18 18"><path d="M2 9l6-6 2 3 4-3v8l-4 2-2 2z" fill="#8ac9f1" stroke="#3a84bb"/><path d="M12 16l3-5 3 5z" fill="#27b13b"/></svg>
            <svg viewBox="0 0 18 18"><path d="M5 2h11v12H5z" fill="#75c8f0" stroke="#dff"/><path d="M2 5h10v11H2z" fill="#f0e63b"/><path d="M5 8l5 5M5 12V8h4" fill="none" stroke="#288b26" stroke-width="2"/></svg>
            <svg viewBox="0 0 18 18"><path d="M2.500 2.500h9v10h-9z" fill="#375f9b" stroke="#a9c7e4"/><path d="M7 6h10v11H7z" fill="#f3ae2a" stroke="#d58b22"/></svg>
        </div>
        <div class="zoom-control">
            <svg width="16" height="16" viewBox="0 0 16 16"><circle cx="8" cy="8" r="7" fill="#e1e8ee"/><path d="M4 8h8" stroke="#252d38" stroke-width="2.500"/></svg>
            <span class="track"><svg width="12" height="16" viewBox="0 0 12 16"><path d="M1 1h10v8l-5 6-5-6z" fill="#346baf" stroke="#dbe7f5" stroke-width="1.500"/><path d="M6 4v6" stroke="#dbe7f5" stroke-width="1.500"/></svg></span>
            <svg width="16" height="16" viewBox="0 0 16 16"><circle cx="8" cy="8" r="7" fill="#e1e8ee"/><path d="M4 8h8M8 4v8" stroke="#252d38" stroke-width="2.300"/></svg>
            <svg width="16" height="16" viewBox="0 0 16 16"><circle cx="8" cy="8" r="7" fill="#cc1717" stroke="#f1dede" stroke-width="1.500"/><circle cx="8" cy="8" r="5" fill="none" stroke="#7e1010"/></svg>
            <svg width="16" height="16" viewBox="0 0 16 16"><path d="M8 1l7 7h-4v4H5V8H1z" fill="#3edb35" stroke="#199825"/><path d="M3 15h10" stroke="#ddd" stroke-width="2"/></svg>
        </div>
    </footer>

    <footer class="taskbar">
        <svg class="start" width="18" height="18" viewBox="0 0 18 18"><path d="M1 4l6-1v6H1zM8 2.500L17 1v8H8zM1 10h6v6H1zM8 10h9v7H8z"/></svg>
        <div class="os-search"><svg width="14" height="14" viewBox="0 0 14 14"><circle cx="7" cy="7" r="5.500" fill="none" stroke="#222" stroke-width="1.300"/></svg><span>Zur Suche Text hier eingeben</span></div>
        <div class="apps">
            <svg viewBox="0 0 26 18"><path d="M5 4v2h11V4M5 16V9h11v7M20 4v4M20 11v5" fill="none" stroke="#222" stroke-width="1.500"/></svg>
            <svg viewBox="0 0 26 18"><circle cx="13" cy="12" r="10" fill="#087fce"/><path d="M7 14q0-7 7-7t7 7" fill="#83d6ee"/></svg>
            <svg viewBox="0 0 26 18"><path d="M1 3h17v3h6v12H1z" fill="#45abac"/><circle cx="11" cy="9" r="5" fill="#fff"/><circle cx="11" cy="9" r="3" fill="#d34d45"/></svg>
            <svg viewBox="0 0 26 18"><circle cx="13" cy="12" r="10" fill="#de4c3c"/><circle cx="13" cy="12" r="5" fill="#fff"/></svg>
            <svg viewBox="0 0 26 18"><path d="M5 3l18 8-18 7z" fill="#429bd9"/></svg>
            <svg viewBox="0 0 26 18"><path d="M2 18L4 5l4 3 6-5 1 3 5-1 3 13z" fill="#f5a52b"/><circle cx="13" cy="11" r="5" fill="#804ec1"/></svg>
            <svg viewBox="0 0 26 18"><path d="M2 3h8l2 3h11v12H2z" fill="#efc84f"/><path d="M2 4h8" stroke="#c48a20" stroke-width="3"/></svg>
            <svg class="running" viewBox="0 0 48 18"><path d="M10 1l15 12-7-1z" fill="#b7d4ed"/><path d="M23 9q7-6 10 9h-9z" fill="#5c9ccc"/></svg>
        </div>
        <div class="tray">
            <svg viewBox="0 0 18 8"><path d="M1 1h16v7H1z" fill="#e63e35"/></svg>
            <svg viewBox="0 0 18 8"><path d="M2 1h7l2 2h6v5H2z" fill="#e6bf45"/></svg>
            <svg viewBox="0 0 18 8"><path d="M6 1h6v7H6z"/></svg>
            <svg viewBox="0 0 18 8"><path d="M6 1.500h6v7H6zM8 3v2M10 3v2" fill="#fff" stroke="#222"/></svg>
            <svg viewBox="0 0 18 8"><path d="M1 4l4-3 4 3 4-3 4 3-8 4z"/></svg>
            <svg viewBox="0 0 18 8"><path d="M1 1h16v7H1z" fill="#c65b19"/><path d="M7 8V4l4-2v6" stroke="#fff" fill="none"/></svg>
            <svg viewBox="0 0 18 8"><path d="M1 1h16v7H1z" fill="#333c42"/></svg>
            <svg viewBox="0 0 18 8"><path d="M2 3.500h15V8M3 3v5M6 4v4" fill="none" stroke="#222" stroke-width="1.500"/></svg>
            <svg viewBox="0 0 18 8"><path d="M6 8l3-5v5z"/></svg>
            <span class="clock">18:25</span>
            <svg class="notify" viewBox="0 0 18 8"><path d="M2 2h14v6H2z" fill="none" stroke="#111" stroke-width="2.500"/></svg>
        </div>
    </footer>

    <div class="tooltip">
        <div class="tooltip-head">
            <svg width="32" height="32" viewBox="0 0 32 32"><path d="M25 11C22 2 2 2 2 9q0 3 6 4" fill="none" stroke="#7195c2" stroke-width="1.700"/><path d="M6 9l5 5-6 2z" fill="#2e62a4"/><path d="M23.500 8.500h6v19h-6z" fill="#bfdffa" stroke="#23578f" stroke-width="1.300"/><path d="M15.500 2v28" stroke="#e32020" stroke-width="2" stroke-dasharray="8 2"/></svg>
            <strong>Rotationsachse</strong>
        </div>
        <p>Platziert eine Achse, um die das<br>Formelement gedreht wird.</p>
        <p class="tooltip-help">Für Hilfe F1 drücken.</p>
    </div>
    <div class="pointer">
        <svg width="16" height="22" viewBox="0 0 16 22"><path d="M2 1v16l4-4 3 7 3.500-1.500-3-6.500H14z" fill="#e713ad" stroke="#351030"/></svg>
    </div>
</body>
</html>
```
FILE: styles.css
```css
* {
    box-sizing: border-box;
}
body {
    position: relative;
    display: flex;
    flex-direction: column;
    width: 1280px;
    height: 720px;
    margin: 0;
    overflow: hidden;
    background-color: #fdfefd;
    color: #222;
    font-family: "Open Sans", "Noto Sans", sans-serif;
    font-size: 12px;
}
svg {
    display: block;
    flex: none;
}
i {
    font-style: normal;
}

/* Title bar */
.titlebar {
    display: flex;
    height: 26px;
    border-bottom: 1px solid #c6cdd1;
}
.app-button {
    width: 38px;
    height: 17px;
    margin-left: 3px;
    padding-left: 2px;
    border: 1px solid #53688a;
    border-top: 0;
    border-radius: 0 0 4px 4px;
}
.tabs {
    display: flex;
    width: 990px;
    padding: 2px 0 0 30px;
}
.tab {
    height: 24px;
    font-size: 11.5px;
    line-height: 26px;
    text-align: center;
    letter-spacing: -0.75px;
    white-space: nowrap;
}
.tab-active {
    width: 56px;
    border: 1px solid #c6cdd1;
    border-bottom: 0;
    background-color: #fdfefd;
    color: #1d4380;
    line-height: 24px;
}
.tab-pruefen {
    width: 58px;
}
.tab-extras {
    width: 60px;
}
.tab-ansicht {
    width: 62px;
}
.tab-daten {
    width: 124px;
}
.brand {
    width: 140px;
    color: #00928f;
    font: bold 20px/28px "Noto Sans", sans-serif;
    letter-spacing: 0.2px;
}
.window-tools {
    display: flex;
    gap: 5.5px;
    padding-top: 5px;
}
.help-mark {
    fill: #fff;
    font: bold 14px "Liberation Sans", sans-serif;
    text-anchor: middle;
}

/* Ribbon */
.ribbon {
    display: flex;
    height: 87px;
    padding-top: 4px;
    border-bottom: 1px solid #c9c9c9;
}
.group {
    position: relative;
    height: 76px;
    border-right: 1px solid #dadada;
}
.group-body {
    display: flex;
    height: 63px;
}
.group-label {
    position: absolute;
    top: 62px;
    left: 0;
    width: 100%;
    color: #777;
    font-size: 11px;
    line-height: 15px;
    text-align: center;
    letter-spacing: -0.15px;
    white-space: nowrap;
}
.g-clipboard { width: 81px; }
.g-select { width: 89px; }
.g-form { width: 53px; }
.g-draw { width: 256px; }
.g-rel { width: 122px; }
.g-intelli { width: 230px; }
.g-dim { width: 52px; }
.g-note { width: 66px; }
.g-prop { width: 85px; }
.g-arr { width: 53px; }
.g-block { width: 53px; }
.g-window { width: 71px; }
.g-close { width: 61px; }
.g-clipboard .group-label {
    left: 3px;
}
.big-button {
    display: flex;
    flex-direction: column;
    align-items: center;
    width: 100%;
    padding-top: 1px;
    font-size: 11.5px;
    line-height: 11px;
    text-align: center;
    letter-spacing: -0.65px;
    white-space: nowrap;
}
.big-button svg {
    margin-bottom: 5px;
}
.small-art svg {
    margin: 5px 0 14px;
}
.big-button > .caret {
    margin-top: 8px;
}
.g-clipboard .big-button {
    width: 61px;
}
.g-clipboard .icon-grid {
    margin-left: -6px;
}
.g-select .big-button {
    width: 66px;
}
.g-select .icon-grid {
    margin-left: -3px;
}
.disabled {
    color: #aaa;
}
.disabled .caret {
    display: inline-block;
    vertical-align: 4px;
}
.caret {
    width: 0;
    height: 0;
    border: 3px solid transparent;
    border-top-color: #888;
    border-bottom: 0;
}
.caret.black {
    border-top-color: #111;
}
.icon-grid {
    display: grid;
    grid-template-rows: repeat(3, 21px);
    grid-auto-columns: 21px;
    align-content: start;
    align-items: center;
}
.cols-2 {
    grid-template-columns: 21px 21px;
    margin-left: 6px;
}
.cols-draw {
    grid-template-columns: repeat(4, 20px 12px);
    margin-left: 7px;
}
.cols-draw .caret {
    justify-self: center;
}
.cols-3 {
    grid-template-columns: repeat(3, 21px);
    margin: 0 1px 0 4px;
}
.cols-xy {
    grid-template-columns: 21px 21px;
    margin-left: 4px;
}
.cols-4 {
    grid-template-columns: repeat(4, 21px);
    margin: 0 2px 0 6px;
}
.cols-check {
    grid-template-columns: repeat(4, 14px 34px);
    margin-left: 9px;
}
.cols-check .ico {
    margin-left: -1px;
}
.toggles {
    margin-left: 3px;
}
.rule {
    width: 1px;
    height: 61px;
    background-color: #dadada;
}
.ico {
    width: 20px;
    height: 20px;
    fill: none;
    stroke: #343c77;
}
.ico text {
    stroke: none;
}
.ico .dot {
    fill: #e8963d;
    stroke: none;
}
.gray {
    stroke: #888;
}
.dark {
    stroke: #202332;
}
.blue {
    fill: #1e64ac;
    stroke: #2b6cae;
    stroke-width: 1.3;
}
.blue .open {
    fill: none;
}
.on {
    height: 21px;
    background-color: #bfd2ef;
}
.pressed {
    background-color: #d6dfe8;
}
.xy {
    fill: #245591;
    font: bold 10px "Liberation Sans", sans-serif;
    text-anchor: middle;
}
.letter-a {
    fill: #111;
    font: bold 8px "Liberation Sans", sans-serif;
    text-anchor: middle;
}
.check {
    width: 13px;
    height: 13px;
    border: 1px solid #999;
    background-color: #fff;
}
.checked::after, .box::after {
    content: "";
    display: block;
    width: 4px;
    height: 8px;
    margin: 0 0 0 4px;
    border: solid #777;
    border-width: 0 2px 2px 0;
    transform: rotate(40deg);
}

/* Work area */
.workspace {
    display: flex;
    height: 571px;
}
.rail {
    display: flex;
    flex-direction: column;
    align-items: center;
    background-color: #f3f4f4;
    color: #24518f;
}
.rail-left {
    width: 29px;
    padding: 7px 5px 0 0;
}
.rail-right {
    width: 29px;
    padding: 8px 0 0 5px;
}
.rail-text {
    writing-mode: vertical-rl;
    line-height: 16px;
    letter-spacing: 0.1px;
    white-space: nowrap;
}
.rail-left .rail-text {
    height: 132px;
    margin: 3px 0 10px;
    letter-spacing: -0.3px;
}
.rail-left .rail-text ~ svg {
    margin-bottom: 16px;
}
.rail-right .rail-text {
    height: 110px;
    margin: 3px 0 41px;
}
.rail-right .rail-text ~ svg {
    margin-bottom: 16px;
}
.yt {
    fill: #fff;
    font: bold 8px "Liberation Sans", sans-serif;
    text-anchor: middle;
}
.yt-dark {
    fill: #26334c;
}
.s-mark {
    fill: #ae6c18;
    font: bold 9px "Liberation Sans", sans-serif;
    text-anchor: middle;
}
.document {
    width: 1222px;
}
.doc-tabs {
    display: flex;
    justify-content: space-between;
    height: 31px;
    padding: 2px 4px 0 2px;
    border-bottom: 1px solid #1c3767;
}
.doc-tab {
    display: flex;
    align-items: center;
    gap: 3px;
    width: 198px;
    padding-left: 17px;
    background-color: #285293;
    color: #fff;
    letter-spacing: -0.35px;
    white-space: nowrap;
}
.doc-nav {
    margin-top: 6px;
}
.doc-body {
    display: flex;
    height: 540px;
    background-color: #f9fbfa;
}
.pathfinder {
    width: 250px;
}
.grip {
    height: 8px;
    border: 1px solid #888;
    border-top-color: #666;
    background-color: #d0d2d2;
}
.grip::after {
    content: "";
    display: block;
    width: 39px;
    height: 2px;
    margin: 2px 0 0 105px;
    background: repeating-linear-gradient(90deg, #4c5c76 0 2px, transparent 2px 4px);
}
.tree {
    padding: 2px 0 0 4px;
}
.row {
    display: flex;
    gap: 5px;
    align-items: center;
    height: 16px;
}
.lvl-0 { height: 15px; }
.lvl-0 .node { padding-left: 2px; }
.lvl-1 { padding-left: 27px; }
.lvl-mat { padding-left: 45px; }
.lvl-ref { padding-left: 11px; }
.lvl-2 { padding-left: 50px; }
.node {
    display: flex;
    gap: 2px;
    align-items: center;
    height: 14px;
    padding: 0 6px 0 1px;
    border: solid #aab1b6;
    border-width: 1px 1px 1px 0;
    background-color: #f1f3f3;
    color: #111;
    font-size: 11px;
    line-height: 12px;
    letter-spacing: -0.1px;
    white-space: nowrap;
}
.node-active {
    border-color: #0cb52d;
    background-color: #0cb52d;
    color: #d5ffd8;
}
.plane {
    fill: #fff;
    stroke: #7d8da5;
}
.box {
    width: 13px;
    height: 12px;
    border: 1px solid #333;
    background-color: #fff;
}
.box::after {
    border-color: #17213a;
}
.minus {
    width: 9px;
    height: 9px;
    margin-right: 2px;
    border: 1px solid #888;
    background: linear-gradient(#333, #333) center / 5px 1px no-repeat #fff;
}
.sequence {
    display: flex;
    align-items: center;
    width: 183px;
    height: 14px;
    margin: 1px 0 0 27px;
    padding: 0 10px 0 7px;
    border: 1px solid #dca241;
    background: linear-gradient(#ffe5a0, #fbc557 50%, #f4b43d 51%, #fbd077);
    color: #111;
    font-size: 11px;
    font-weight: 600;
    line-height: 12px;
    letter-spacing: -0.1px;
}
.sequence span {
    flex: 1;
    padding-left: 1px;
}
.canvas {
    position: relative;
    width: 972px;
}
.drawing {
    position: absolute;
    top: 0;
    left: 0;
}
.dimension {
    fill: #dc1458;
    stroke: #dc1458;
    stroke-width: 0.5;
    font: 28px "Liberation Sans", sans-serif;
    text-anchor: middle;
}
.axis {
    fill: #202878;
    font: 14px "Liberation Sans", sans-serif;
    text-anchor: middle;
}
.cube-label {
    fill: #444;
    font: 12.5px "Liberation Sans", sans-serif;
    text-anchor: middle;
}

/* Command bar over the canvas */
.command-bar {
    position: relative;
    display: flex;
    align-items: center;
    width: 706px;
    height: 71px;
    margin-top: 1px;
    padding: 0 2px;
    border: 1px solid #222a38;
    border-top: 2px solid #9aa3ab;
    border-radius: 0 0 3px 2px;
    background-color: #fcfdfd;
}
.tool {
    display: flex;
    align-items: center;
    justify-content: center;
    width: 30px;
    height: 28px;
    border: 1px solid #9eacbd;
    background: linear-gradient(#f5f9fd, #e0ebf9 48%, #d4e4f7 50%, #e7f0fa);
}
.tool-large {
    width: 42px;
    height: 36px;
}
.tool.active {
    border-color: #9b7650;
    background: linear-gradient(#fac891, #f3a44f 48%, #ee9333 50%, #f9c473);
}
.tool.light {
    background: linear-gradient(#fdd9a8, #fbc37c 48%, #f9b45f 50%, #fdd48e);
}
.tool.off {
    border-color: #bbb;
    background: #f4f5f5;
}
.off svg {
    stroke: #999;
}
.tool-grid {
    display: grid;
    grid-template-rows: 28px 28px;
    row-gap: 4px;
}
.pair {
    margin-left: 5px;
}
.trio {
    grid-template-columns: repeat(3, 30px);
    column-gap: 3px;
    margin-left: 6px;
}
.edit {
    width: 45px;
    margin-left: 6px;
}
.split {
    display: flex;
    gap: 2px;
}
.drop {
    width: 13px;
}
.key {
    color: #111;
    font-size: 13px;
    font-weight: 700;
    line-height: 16px;
}
.ring {
    width: 19px;
    height: 14px;
    border: 1px solid #111;
    border-radius: 6px;
    line-height: 10px;
    text-align: center;
}
.fields {
    display: flex;
    flex-direction: column;
    gap: 12px;
    margin-left: 6px;
}
.field {
    width: 190px;
    height: 21px;
    padding-left: 3px;
    border: 1px solid #888;
    background-color: #fff;
    line-height: 18px;
    letter-spacing: -0.4px;
}
.field-gray {
    border-color: #bbb;
    background-color: #e0e1e1;
}
.combo {
    display: flex;
    align-items: center;
    justify-content: flex-end;
    width: 75px;
    height: 21px;
    padding-right: 5px;
    border: 1px solid #c5c5c5;
    background: linear-gradient(#f1f2f2, #f1f2f2) 3px 3px / 52px 13px no-repeat #fafbfb;
}
.combo-style {
    width: 134px;
    margin: -30px 0 0 9px;
    border-color: #aaa;
    background: #dedfdf;
}
.combo-style .chevron {
    border-color: #333;
}
.chevron {
    width: 6px;
    height: 6px;
    margin-bottom: 3px;
    border: solid #999;
    border-width: 0 1px 1px 0;
    transform: rotate(45deg);
}
.signs {
    display: grid;
    grid-template-rows: 30px 30px;
    width: 24px;
    padding-left: 4px;
    color: #888;
    line-height: 29px;
}
.limits {
    display: grid;
    gap: 8px;
}
.finish {
    position: relative;
    width: 26px;
    margin: 6px 0 0 6px;
}

/* Status bar */
.statusbar {
    display: flex;
    align-items: center;
    height: 20px;
    border: 1px solid #183e7a;
    background-color: #285799;
    color: #fff;
}
.prompt {
    width: 737px;
    padding-left: 210px;
    letter-spacing: -0.35px;
    white-space: nowrap;
}
.command-search {
    width: 140px;
    height: 18px;
    padding-left: 3px;
    background-color: #fff;
    color: #b2b2ae;
    line-height: 18px;
    letter-spacing: -0.4px;
    white-space: nowrap;
}
.status-icons {
    display: flex;
    gap: 4.4px;
    margin-left: 1px;
}
.status-icons svg {
    width: 18px;
    height: 18px;
}
.zoom-control {
    display: flex;
    align-items: center;
    margin-left: 5px;
}
.track {
    display: flex;
    justify-content: center;
    width: 112px;
    margin: 0 2px;
    background: linear-gradient(#d5e0ed, #d5e0ed) center / 100% 1px no-repeat;
}
.track svg {
    margin-right: 8px;
}
.track + svg, .track + svg + svg {
    margin-right: 8px;
}

/* Windows taskbar */
.taskbar {
    display: flex;
    height: 16px;
    overflow: hidden;
    background-color: #eceeed;
}
.start {
    margin: 11px 0 0 15px;
}
.os-search {
    display: flex;
    width: 343px;
    height: 40px;
    margin-left: 16px;
    padding: 12px 0 0 14px;
    border: 1px solid #bbb;
    background-color: #fff;
}
.os-search span {
    padding-left: 10px;
    line-height: 14px;
    font-size: 13px;
}
.apps {
    display: flex;
    gap: 23px;
    padding: 9px 0 0 12px;
}
.apps svg {
    width: 26px;
    height: 18px;
}
.apps .running {
    width: 48px;
    height: 26px;
    margin: -9px 0 0 -9px;
    padding-top: 8px;
    background-color: #fbfcfc;
}
.tray {
    display: flex;
    gap: 6px;
    margin-left: 170px;
    padding-top: 11px;
}
.tray svg {
    width: 18px;
    height: 8px;
}
.clock {
    width: 28px;
    margin: -8px 0 0 9px;
    color: #111;
    font-size: 11.5px;
    letter-spacing: -0.5px;
}
.tray .notify {
    margin-left: 24px;
}

/* Tooltip and mouse pointer */
.tooltip {
    position: absolute;
    top: 113px;
    left: 405px;
    width: 244px;
    height: 140px;
    padding: 15px 16px;
    border: 1px solid #73767c;
    background-color: #f4f7fc;
    box-shadow: 3px 3px 4px rgba(0, 0, 0, 0.4);
    color: #222;
    font-size: 11.7px;
    line-height: 14px;
    white-space: nowrap;
}
.tooltip-head {
    display: flex;
    height: 46px;
    border-bottom: 1px solid #3f6186;
}
.tooltip-head strong {
    padding: 21px 0 0 5px;
    color: #333;
    font-size: 14.5px;
}
.tooltip p {
    margin: 8px 0 10px 2px;
}
.tooltip .tooltip-help {
    margin-left: 0;
    color: #111;
}
.pointer {
    position: absolute;
    top: 40px;
    left: 393px;
    width: 50px;
    height: 50px;
    padding: 23px 0 0 24px;
    border-radius: 50%;
    background-color: rgba(250, 235, 55, 0.55);
}
```
